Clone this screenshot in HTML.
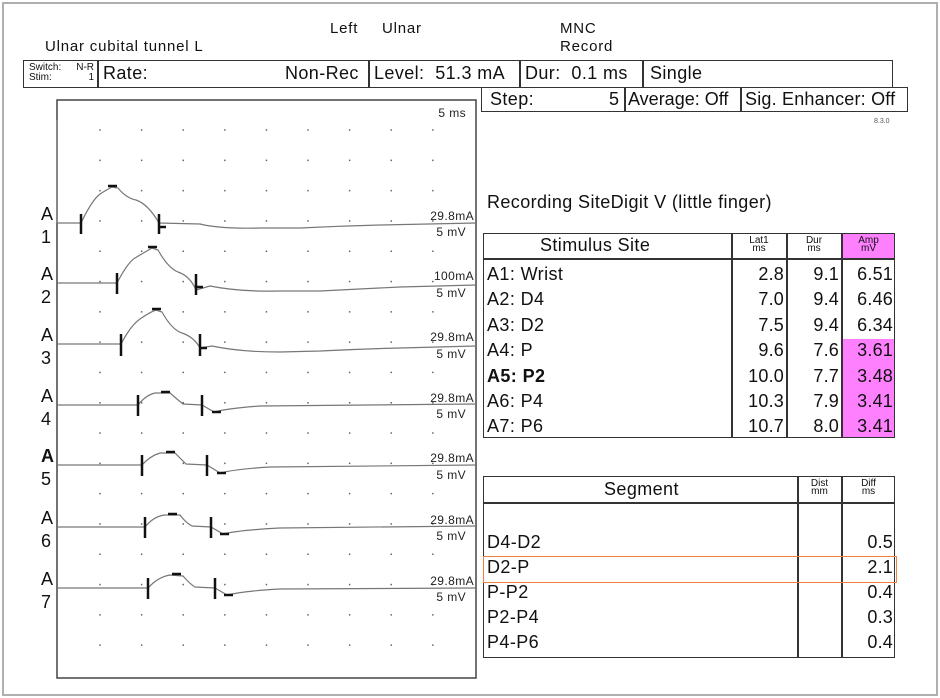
<!DOCTYPE html>
<html><head><meta charset="utf-8"><style>
*{margin:0;padding:0;box-sizing:border-box}
body{width:940px;height:698px;background:#fff;font-family:"Liberation Sans",Arial,sans-serif;color:#111;position:relative;overflow:hidden}
.a{position:absolute;white-space:nowrap}
.b{position:absolute;border:1.5px solid #333}
.vl{position:absolute;width:1.5px;background:#333}
.hl{position:absolute;height:1.5px;background:#333}
.t13{font-size:15px;letter-spacing:0.8px}
.t16{font-size:18px;letter-spacing:0.4px}
.sm{font-size:10px;line-height:8px;text-align:center}
.r{text-align:right}
</style></head><body>
<div class="a" style="left:2px;top:2px;width:936px;height:694px;border:2px solid #b0b0b0"></div>

<div class="a t13" style="left:330px;top:20px">Left</div>
<div class="a t13" style="left:382px;top:20px">Ulnar</div>
<div class="a t13" style="left:560px;top:20px">MNC</div>
<div class="a t13" style="left:560px;top:38px">Record</div>
<div class="a t13" style="left:45px;top:38px">Ulnar cubital tunnel L</div>

<!-- top row -->
<div class="b" style="left:23px;top:60px;width:870px;height:28px"></div>
<div class="vl" style="left:97px;top:60px;height:28px"></div>
<div class="vl" style="left:368px;top:60px;height:28px"></div>
<div class="vl" style="left:519px;top:60px;height:28px"></div>
<div class="vl" style="left:642px;top:60px;height:28px"></div>
<div class="a" style="left:29px;top:63px;font-size:10px;line-height:10px">Switch:<br>Stim:</div>
<div class="a r" style="left:66px;top:63px;width:28px;font-size:10px;line-height:10px">N-R<br>1</div>
<div class="a t16" style="left:103px;top:63px">Rate:</div>
<div class="a t16" style="left:285px;top:63px">Non-Rec</div>
<div class="a t16" style="left:374px;top:63px">Level:&nbsp; 51.3 mA</div>
<div class="a t16" style="left:525px;top:63px">Dur:&nbsp; 0.1 ms</div>
<div class="a t16" style="left:650px;top:63px">Single</div>
<!-- second row -->
<div class="b" style="left:481px;top:87px;width:427px;height:25px"></div>
<div class="vl" style="left:624px;top:87px;height:25px"></div>
<div class="vl" style="left:740px;top:87px;height:25px"></div>
<div class="a t16" style="left:490px;top:89px">Step:</div>
<div class="a t16" style="left:609px;top:89px">5</div>
<div class="a t16" style="left:628px;top:89px;letter-spacing:0">Average: Off</div>
<div class="a t16" style="left:745px;top:89px;letter-spacing:0.2px">Sig. Enhancer: Off</div>
<div class="a" style="left:874px;top:118px;font-size:7px;color:#555">8.3.0</div>

<!-- plot -->
<svg class="a" style="left:0;top:0" width="940" height="698">
<rect x="57" y="100" width="419" height="578" fill="none" stroke="#444" stroke-width="1.5"/>
<g fill="#666" id="dots"></g>
<g fill="none" stroke="#777" stroke-width="1.2">
<line x1="57" y1="120" x2="57" y2="223"/>
<path d="M57 223 L81 223 Q92 200 100 194 Q106 190 112 187 L118 188 Q126 198 136 200 Q148 204 159 223 L200 224 Q220 229 260 228 L300 228 Q340 226 380 225 L476 223"/>
<path d="M57 283 L117 283 Q128 262 135 258 Q145 252 152 248 L158 250 Q168 268 178 272 Q190 276 196 290 L210 286 Q240 292 280 291 L320 291 Q360 289 400 287 L476 285"/>
<path d="M57 344 L121 344 Q131 325 140 319 Q150 312 156 310 L162 312 Q172 330 182 333 Q194 337 200 348 L212 346 Q240 352 280 352 L320 351 Q360 349 400 348 L476 346"/>
<path d="M57 405 L138 405 Q146 395 155 393 L170 393 Q178 400 183 404 L202 405 L214 412 Q230 408 260 406 L476 404"/>
<path d="M57 465 L142 465 Q150 456 160 453 L175 453 Q182 460 186 464 L207 465 L220 473 Q236 469 270 467 L476 465"/>
<path d="M57 527 L145 527 Q154 516 165 515 L180 515 Q186 523 192 526 L211 527 L223 534 Q240 530 280 528 L476 526"/>
<path d="M57 588 L148 588 Q158 577 170 575 L183 576 Q190 584 195 587 L215 588 L227 595 Q244 591 280 589 L476 588"/>
</g>
<g stroke="#111" stroke-width="2.5">
<line x1="81" y1="214" x2="81" y2="234"/><line x1="159" y1="214" x2="159" y2="234"/><line x1="159" y1="227" x2="166" y2="227"/><line x1="108" y1="186" x2="117" y2="186"/>
<line x1="117" y1="273" x2="117" y2="294"/><line x1="196" y1="274" x2="196" y2="295"/><line x1="196" y1="287" x2="203" y2="287"/><line x1="148" y1="247" x2="157" y2="247"/>
<line x1="121" y1="334" x2="121" y2="356"/><line x1="200" y1="334" x2="200" y2="356"/><line x1="200" y1="348" x2="207" y2="348"/><line x1="152" y1="309" x2="161" y2="309"/>
<line x1="138" y1="395" x2="138" y2="416"/><line x1="202" y1="395" x2="202" y2="416"/><line x1="212" y1="412" x2="221" y2="412"/><line x1="161" y1="392" x2="170" y2="392"/>
<line x1="142" y1="455" x2="142" y2="476"/><line x1="207" y1="455" x2="207" y2="476"/><line x1="217" y1="473" x2="226" y2="473"/><line x1="166" y1="452" x2="175" y2="452"/>
<line x1="145" y1="517" x2="145" y2="538"/><line x1="211" y1="517" x2="211" y2="538"/><line x1="220" y1="534" x2="229" y2="534"/><line x1="168" y1="514" x2="177" y2="514"/>
<line x1="148" y1="578" x2="148" y2="599"/><line x1="215" y1="578" x2="215" y2="599"/><line x1="224" y1="595" x2="233" y2="595"/><line x1="172" y1="574" x2="181" y2="574"/>
</g>
<g font-family="Liberation Sans,Arial,sans-serif" font-size="12" fill="#222" text-anchor="end" letter-spacing="0.4">
<text x="466" y="117">5 ms</text>
<text x="474" y="220">29.8mA</text><text x="466" y="236">5 mV</text>
<text x="474" y="280">100mA</text><text x="466" y="297">5 mV</text>
<text x="474" y="341">29.8mA</text><text x="466" y="358">5 mV</text>
<text x="474" y="402">29.8mA</text><text x="466" y="418">5 mV</text>
<text x="474" y="462">29.8mA</text><text x="466" y="479">5 mV</text>
<text x="474" y="524">29.8mA</text><text x="466" y="540">5 mV</text>
<text x="474" y="585">29.8mA</text><text x="466" y="601">5 mV</text>
</g>
<g font-family="Liberation Sans,Arial,sans-serif" font-size="18" fill="#111">
<text x="41" y="220">A</text><text x="41" y="243">1</text>
<text x="41" y="280">A</text><text x="41" y="303">2</text>
<text x="41" y="341">A</text><text x="41" y="364">3</text>
<text x="41" y="402">A</text><text x="41" y="425">4</text>
<text x="41" y="462" font-weight="bold">A</text><text x="41" y="485">5</text>
<text x="41" y="524">A</text><text x="41" y="547">6</text>
<text x="41" y="585">A</text><text x="41" y="608">7</text>
</g>
</svg>

<div class="a t16" style="left:487px;top:192px">Recording SiteDigit V (little finger)</div>

<!-- stimulus table -->
<div class="a" style="left:842px;top:233px;width:52px;height:25px;background:#ff80ff"></div>
<div class="a" style="left:842px;top:339px;width:52px;height:98px;background:#ff80ff"></div>
<div class="b" style="left:483px;top:233px;width:412px;height:205px"></div>
<div class="hl" style="left:483px;top:258px;width:412px"></div>
<div class="vl" style="left:731px;top:233px;height:205px"></div>
<div class="vl" style="left:786px;top:233px;height:205px"></div>
<div class="vl" style="left:841px;top:233px;height:205px"></div>
<div class="a t16" style="left:540px;top:235px">Stimulus Site</div>
<div class="a sm" style="left:732px;top:237px;width:54px">Lat1<br>ms</div>
<div class="a sm" style="left:787px;top:237px;width:54px">Dur<br>ms</div>
<div class="a sm" style="left:842px;top:237px;width:53px">Amp<br>mV</div>
<div class="a t16" style="left:487px;top:262px;line-height:25.4px">A1: Wrist<br>A2: D4<br>A3: D2<br>A4: P<br><b>A5: P2</b><br>A6: P4<br>A7: P6</div>
<div class="a t16 r" style="left:730px;top:262px;width:54px;line-height:25.4px;letter-spacing:0.2px">2.8<br>7.0<br>7.5<br>9.6<br>10.0<br>10.3<br>10.7</div>
<div class="a t16 r" style="left:785px;top:262px;width:54px;line-height:25.4px;letter-spacing:0.2px">9.1<br>9.4<br>9.4<br>7.6<br>7.7<br>7.9<br>8.0</div>
<div class="a t16 r" style="left:840px;top:262px;width:53px;line-height:25.4px;letter-spacing:0.2px">6.51<br>6.46<br>6.34<br>3.61<br>3.48<br>3.41<br>3.41</div>

<!-- segment table -->
<div class="b" style="left:483px;top:476px;width:412px;height:182px"></div>
<div class="hl" style="left:483px;top:502px;width:412px"></div>
<div class="vl" style="left:797px;top:476px;height:182px"></div>
<div class="vl" style="left:841px;top:476px;height:182px"></div>
<div class="a t16" style="left:604px;top:479px">Segment</div>
<div class="a sm" style="left:798px;top:480px;width:43px">Dist<br>mm</div>
<div class="a sm" style="left:842px;top:480px;width:53px">Diff<br>ms</div>
<div class="a" style="left:483px;top:556px;width:414px;height:27px;border:1.5px solid #f08040"></div>
<div class="a t16" style="left:487px;top:530px;line-height:25px">D4-D2<br>D2-P<br>P-P2<br>P2-P4<br>P4-P6</div>
<div class="a t16 r" style="left:840px;top:530px;width:53px;line-height:25px;letter-spacing:0.2px">0.5<br>2.1<br>0.4<br>0.3<br>0.4</div>

<script>
var g=document.getElementById('dots'),s='';
for(var y=130;y<660;y+=30.3){for(var i=0;i<9;i++){var x=100+i*41.6;s+='<rect x="'+(x-0.7).toFixed(1)+'" y="'+(y-0.7).toFixed(1)+'" width="1.5" height="1.5"/>';}}
g.innerHTML=s;
</script>
</body></html>
